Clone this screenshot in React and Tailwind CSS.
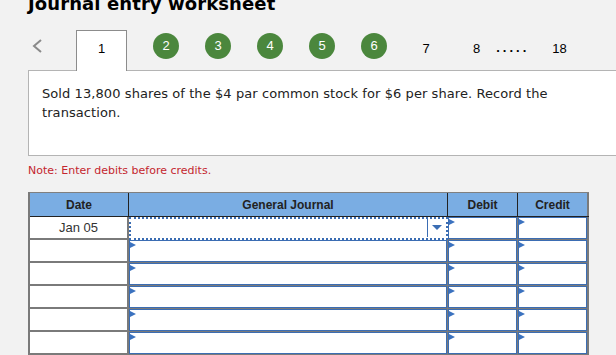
import React from 'react'

const BLUE = 'border-[#3b6db3]'

function Marker() {
    return (
        <span className="absolute top-[1px] left-0 w-0 h-0 border-y-[3.5px] border-y-transparent border-l-[6px] border-l-[#3b72bf]" />
    )
}

function InputCell({ last }) {
    return (
        <div className={`h-[23px] border-b border-r ${last ? 'border-r-2' : ''} border-[#7a7a7a] bg-white`}>
            <div className={`relative h-full border ${BLUE} bg-white`}>
                <Marker />
            </div>
        </div>
    )
}

function DateCell({ children }) {
    return (
        <div className="h-[23px] border-b-2 border-r-2 border-[#7a7a7a] bg-white flex items-center justify-center text-[13px] text-[#333]">
            {children}
        </div>
    )
}

export default function App() {
    const circles = ['2', '3', '4', '5', '6']
    return (
        <div className="w-[616px] h-[355px] overflow-hidden bg-[#f2f2f2] font-['Liberation_Sans',Arial,sans-serif]">
            {/* Title, cut at top */}
            <h1 className="-mt-[7px] ml-[28px] text-[18px] leading-[22px] font-bold text-black tracking-[0.1px] font-['DejaVu_Sans',Verdana,sans-serif]">
                Journal entry worksheet
            </h1>

            {/* Question tabs */}
            <div className="mt-[15px] flex items-start h-[41px] relative z-10">
                <div className="ml-[32px] mt-[9px] w-[10px] h-[14px]">
                    <svg width="10" height="14" viewBox="0 0 10 14">
                        <polyline points="9,1 2,7 9,13" fill="none" stroke="#8a8a8a" strokeWidth="2" />
                    </svg>
                </div>
                <div className="ml-[34px] w-[51px] h-[41px] bg-white border border-b-0 border-[#8c8c8c] flex justify-center pt-[8px] text-[13px] text-black">
                    1
                </div>
                <div className="ml-[13px] flex">
                    {circles.map((n) => (
                        <div key={n} className="w-[52px] flex justify-center pt-[3px]">
                            <div className="w-[26px] h-[26px] rounded-full bg-[#4b873d] text-white text-[13px] flex items-center justify-center">
                                {n}
                            </div>
                        </div>
                    ))}
                    <div className="w-[52px] flex justify-center pt-[9px] text-[13px] text-black">7</div>
                </div>
                <span className="ml-[21px] pt-[9px] text-[13px] text-black">8</span>
                <span className="ml-[16px] pt-[8px] text-[13px] font-bold tracking-[3px] text-black">.....</span>
                <span className="ml-[23px] pt-[9px] text-[13px] text-black">18</span>
            </div>

            {/* Question panel */}
            <div className="-mt-px ml-[28px] h-[86px] bg-white border border-r-0 border-[#b4b4b4] pl-[13px] pt-[13px] pr-[30px]">
                <p className="text-[13px] leading-[19px] tracking-[0.08px] text-[#222] font-['DejaVu_Sans',Verdana,sans-serif]">
                    Sold 13,800 shares of the $4 par common stock for $6 per share. Record the transaction.
                </p>
            </div>

            <p className="mt-[8px] ml-[28px] text-[11px] leading-[14px] text-[#c4262e] font-['DejaVu_Sans',Verdana,sans-serif]">
                Note: Enter debits before credits.
            </p>

            {/* Journal table */}
            <div className="mt-[14px] ml-[28px] w-[561px] border-l-2 border-[#7a7a7a]">
                <div className="grid grid-cols-[99px_319px_70px_71px] h-[25px] bg-[#7aade3] border-t border-b border-t-[#808080] border-b-[#222] text-[12px] font-bold text-[#222]">
                    <div className="flex items-center justify-center border-r border-[#222]">Date</div>
                    <div className="flex items-center justify-center border-r border-[#222]">General Journal</div>
                    <div className="flex items-center justify-center border-r border-[#222]">Debit</div>
                    <div className="flex items-center justify-center border-r-2 border-[#7a7a7a]">Credit</div>
                </div>

                <div className="grid grid-cols-[99px_319px_70px_71px]">
                    {/* First row with focused select */}
                    <DateCell>Jan 05</DateCell>
                    <div className="h-[23px] border-2 border-dotted border-[#3b6db3] bg-white flex justify-end">
                        <div className="w-[19px] h-[18px] border-l border-[#3b6db3] flex justify-center pt-[6px]">
                            <span className="w-0 h-0 border-x-[5px] border-x-transparent border-t-[5px] border-t-[#3b6db3]" />
                        </div>
                    </div>
                    <InputCell />
                    <InputCell last />

                    {[0, 1, 2, 3, 4].map((i) => (
                        <React.Fragment key={i}>
                            <DateCell />
                            <InputCell />
                            <InputCell />
                            <InputCell last />
                        </React.Fragment>
                    ))}
                </div>
            </div>
        </div>
    )
}
